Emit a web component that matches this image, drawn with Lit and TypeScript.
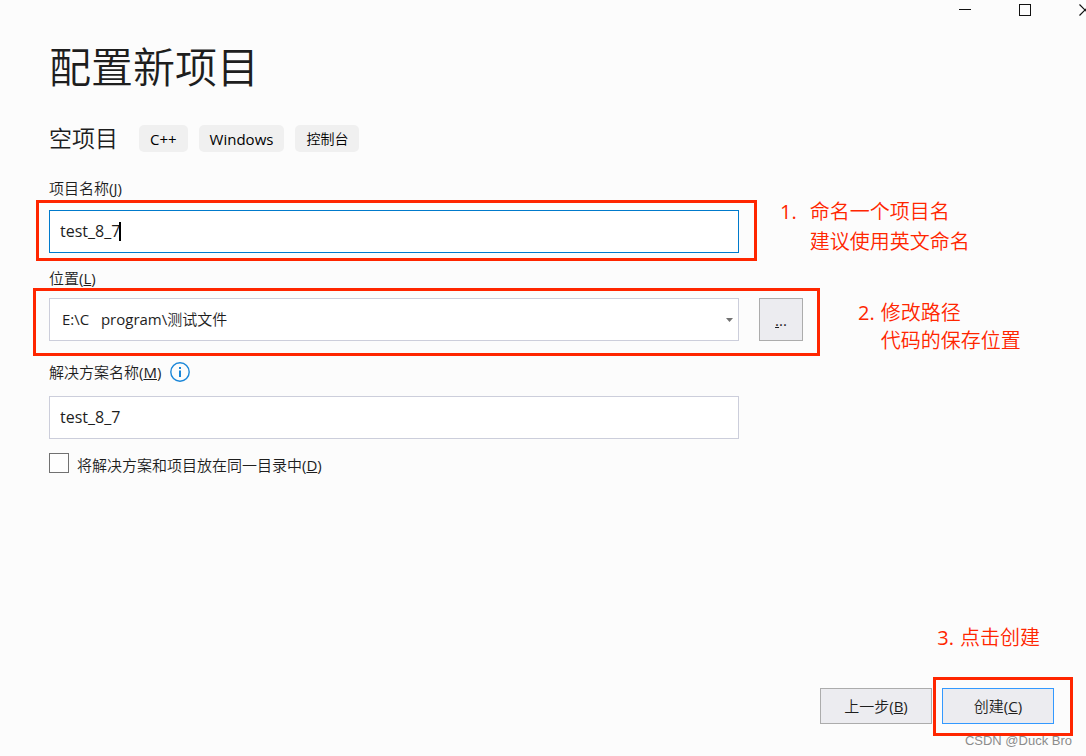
import { LitElement, html, css } from "lit";
import { customElement, state } from "lit/decorators.js";

@customElement("app-root")
class AppRoot extends LitElement {
  @state() private projectName = "test_8_7";
  @state() private solutionName = "test_8_7";

  static styles = css`
    :host {
      display: block;
      font-family: "Open Sans", "Noto Sans CJK SC DemiLight", "Noto Sans CJK SC", sans-serif;
      font-size: 15px;
      line-height: 20px;
      color: #1e1e1e;
    }
    * {
      box-sizing: border-box;
    }
    button,
    input,
    select {
      font: inherit;
      color: inherit;
      margin: 0;
      border-radius: 0;
      outline: none;
    }
    .window {
      position: relative;
      display: flex;
      flex-direction: column;
      min-height: 100vh;
      overflow: hidden;
      background: #fcfcfc;
    }
    .titlebar {
      display: flex;
      justify-content: flex-end;
      height: 20px;
      margin-right: -29px;
    }
    .titlebar button {
      width: 60px;
      padding: 0;
      border: 0;
      background: none;
      display: grid;
      place-items: center;
    }
    .body {
      padding: 15px 49px 0;
    }
    h1 {
      margin: 0;
      font-size: 42px;
      line-height: 64px;
      font-weight: 350;
    }
    .template {
      display: flex;
      align-items: center;
      gap: 21px;
      margin-top: 22px;
      height: 34px;
    }
    h2 {
      margin: 0;
      font-size: 23px;
      line-height: 34px;
      font-weight: 350;
    }
    .tags {
      display: flex;
      gap: 11px;
      margin: 0;
      padding: 0;
      list-style: none;
    }
    .tags li {
      padding: 4px 11px 3px;
      border-radius: 5px;
      background: #f0f0f0;
      color: #000;
    }
    .tags .small {
      font-size: 14px;
    }
    .form {
      margin-top: 23px;
      max-width: 690px;
    }
    .label {
      display: flex;
      align-items: center;
      gap: 9px;
      height: 20px;
    }
    .field {
      position: relative;
      height: 43px;
      margin: 12px 0 15px;
    }
    .field.location {
      margin: 10px 0 21px;
      display: flex;
      gap: 20px;
      width: calc(100% + 64px);
    }
    .field.solution {
      margin: 14px 0;
    }
    .field input,
    .field select {
      width: 100%;
      height: 43px;
      padding: 0 10px 2px;
      border: 1px solid #cccedb;
      background: #fff;
      appearance: none;
    }
    .field input {
      font-size: 16px;
    }
    .field input.active {
      border-color: #007acc;
    }
    .combo {
      position: relative;
      flex: 1;
    }
    .combo select {
      padding-left: 12px;
    }
    .arrow {
      position: absolute;
      right: 6px;
      top: 20px;
      pointer-events: none;
    }
    .caret {
      position: absolute;
      left: 70px;
      top: 12px;
      width: 2px;
      height: 19px;
      background: #000;
    }
    .browse {
      width: 44px;
      height: 43px;
      padding: 0;
    }
    .push {
      border: 1px solid #acacac;
      background: #ececf0;
    }
    .check {
      display: flex;
      align-items: center;
      gap: 8px;
      height: 20px;
    }
    .check input {
      appearance: none;
      width: 20px;
      height: 20px;
      border: 1px solid #717171;
      background: #fefefe;
    }
    .check input:checked {
      background: #007acc;
    }
    .check label {
      padding-top: 4px;
    }
    .footer {
      display: flex;
      justify-content: flex-end;
      gap: 10px;
      margin-top: auto;
      padding: 32px;
    }
    .footer .push {
      width: 112px;
      height: 36px;
      padding: 0;
    }
    .footer .primary {
      border-color: #3399ff;
    }
    .action {
      position: relative;
    }
    .mark {
      position: absolute;
      border: 3px solid #ff2600;
      pointer-events: none;
    }
    .mark.name {
      inset: -10px -18px -8px -13px;
    }
    .mark.path {
      inset: -10px -17px -15px -16px;
    }
    .mark.create {
      inset: -11px -19px -12px -9px;
    }
    .note {
      position: absolute;
      display: flex;
      margin: 0;
      font-size: 20px;
      line-height: 30px;
      color: #ff2600;
      white-space: nowrap;
    }
    .note.name {
      left: calc(100% + 41px);
      top: -13px;
      gap: 13px;
    }
    .note.path {
      left: calc(100% + 55px);
      top: 1px;
      gap: 6px;
      line-height: 28px;
    }
    .note.create {
      right: 14px;
      bottom: 71px;
      gap: 6px;
    }
    .watermark {
      position: absolute;
      right: 14px;
      bottom: 6px;
      font-family: "Liberation Sans", sans-serif;
      font-size: 13px;
      line-height: 18px;
      color: #8c8c8c;
    }
  `;

  render() {
    return html`
      <div class="window">
        <div class="titlebar">
          <button aria-label="最小化">
            <svg width="14" height="14"><path d="M1 6.5h12" stroke="#111" /></svg>
          </button>
          <button aria-label="最大化">
            <svg width="14" height="14"><rect x="1.5" y="1.5" width="11" height="11" fill="none" stroke="#111" /></svg>
          </button>
          <button aria-label="关闭">
            <svg width="14" height="14"><path d="M1.5 1.5l11 11M12.5 1.5l-11 11" stroke="#111" stroke-width="1.2" /></svg>
          </button>
        </div>
        <main class="body">
          <h1>配置新项目</h1>
          <div class="template">
            <h2>空项目</h2>
            <ul class="tags">
              <li>C++</li>
              <li>Windows</li>
              <li class="small">控制台</li>
            </ul>
          </div>
          <div class="form">
            <div class="label"><label for="name">项目名称(<u>J</u>)</label></div>
            <div class="field">
              <input
                id="name"
                class="active"
                .value=${this.projectName}
                @input=${(e: Event) => (this.projectName = (e.target as HTMLInputElement).value)}
              />
              <span class="caret"></span>
              <div class="mark name"></div>
              <p class="note name"><span>1.</span><span>命名一个项目名<br />建议使用英文命名</span></p>
            </div>
            <div class="label"><label for="path">位置(<u>L</u>)</label></div>
            <div class="field location">
              <div class="combo">
                <select id="path">
                  <option>E:\\C&nbsp;&nbsp; program\\测试文件</option>
                </select>
                <svg class="arrow" width="7" height="4"><path d="M0 0h7L3.5 4z" fill="#717171" /></svg>
              </div>
              <button class="push browse" aria-label="浏览"><u>.</u>..</button>
              <div class="mark path"></div>
              <p class="note path"><span>2.</span><span>修改路径<br />代码的保存位置</span></p>
            </div>
            <div class="label">
              <label for="solution">解决方案名称(<u>M</u>)</label>
              <svg width="20" height="20" viewBox="0 0 20 20">
                <circle cx="10" cy="10" r="9.2" fill="none" stroke="#1a86d8" stroke-width="1.4" />
                <path d="M9 5h2v2H9zM9 8.5h2V15H9z" fill="#1a86d8" />
              </svg>
            </div>
            <div class="field solution">
              <input
                id="solution"
                .value=${this.solutionName}
                @input=${(e: Event) => (this.solutionName = (e.target as HTMLInputElement).value)}
              />
            </div>
            <div class="check">
              <input id="same" type="checkbox" />
              <label for="same">将解决方案和项目放在同一目录中(<u>D</u>)</label>
            </div>
          </div>
        </main>
        <footer class="footer">
          <button class="push">上一步(<u>B</u>)</button>
          <div class="action">
            <button class="push primary">创建(<u>C</u>)</button>
            <div class="mark create"></div>
            <p class="note create"><span>3.</span><span>点击创建</span></p>
          </div>
        </footer>
        <div class="watermark">CSDN @Duck Bro</div>
      </div>
    `;
  }
}
